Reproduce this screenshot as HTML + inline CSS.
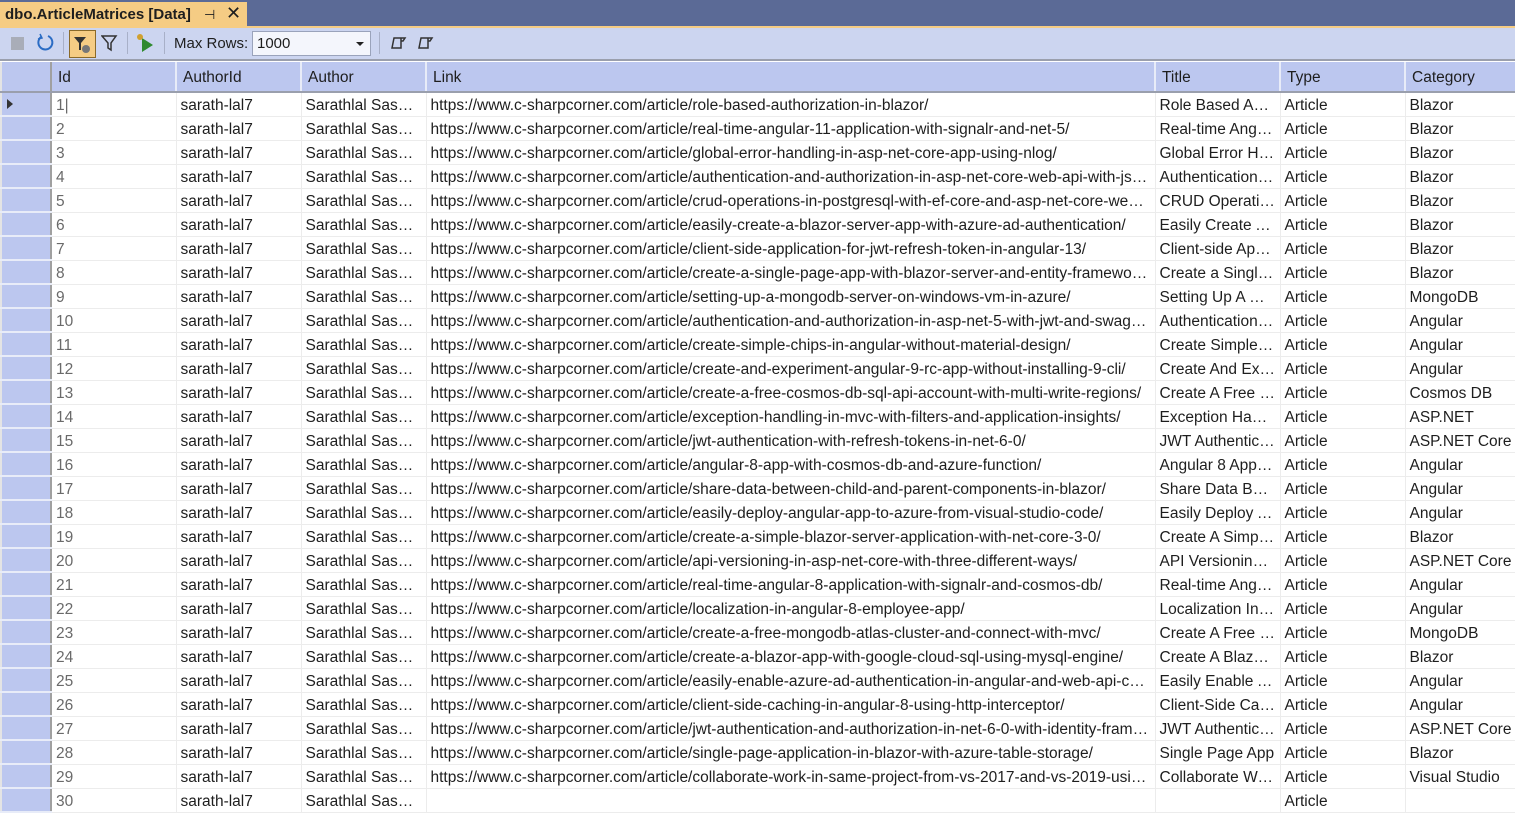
<!DOCTYPE html>
<html><head><meta charset="utf-8"><style>
*{margin:0;padding:0;box-sizing:border-box}
body{width:1515px;height:792px;overflow:hidden;background:#fff;font-family:"Liberation Sans",sans-serif;font-size:15.5px;color:#1e1e1e;position:relative}
.tabbar{position:absolute;left:0;top:0;width:1515px;height:26px;background:#5b6a96}
.tab{position:absolute;left:0;top:2px;width:247px;height:26px;background:#f5cc84;font-weight:bold;font-size:15px;line-height:25px;padding-left:5px;color:#1e1e1e}
.tab .pin{position:absolute;left:204px;top:0;font-weight:normal;font-size:13px}
.tab .x{position:absolute;left:226px;top:-1px;font-weight:normal;font-size:18px}
.oline{position:absolute;left:0;top:26px;width:1515px;height:2px;background:#f5cc84}
.tb{position:absolute;left:0;top:28px;width:1515px;height:33px;background:#ccd5f0;border-bottom:2px solid #9a9fad}
.sep{position:absolute;top:4px;width:1px;height:22px;background:#a8b0c8}
.lbl{position:absolute;left:174px;top:7px;font-size:15px}
.combo{position:absolute;left:252px;top:3px;width:119px;height:25px;background:#f4f6fc;border:1px solid #9aa3bb;padding:3px 4px;font-size:15px}
.combo:after{content:"";position:absolute;right:6px;top:10px;border:4px solid transparent;border-top:4px solid #222}
table{position:absolute;left:0;top:62px;border-collapse:collapse;table-layout:fixed;width:1529px}
th{height:30px;background:#bcc7ef;font-weight:normal;text-align:left;padding-left:6px;padding-top:3px;border-right:2px solid #e8ecf8;border-bottom:2px solid #9a9fad;font-size:15.5px;color:#1e1e1e;overflow:hidden;white-space:nowrap}
td{height:24px;padding-left:4px;padding-right:4px;padding-top:3px;white-space:nowrap;overflow:hidden;text-overflow:ellipsis;border-right:1px solid #ececec;border-bottom:1px solid #ececec}
td.rh{background:#bcc7ef;border-left:2px solid #e4e4e4;border-right:2px solid #a0a0a0;border-bottom:2px solid #e8ecf8;padding:0}
th.rh{border-right:2px solid #a0a0a0;border-left:2px solid #e4e4e4;padding:0}
td.id{color:#6a6a6a}
</style></head><body>
<div class="tabbar"></div>
<div class="tab">dbo.ArticleMatrices [Data]<span class="pin">⊣</span><span class="x">✕</span></div>
<div class="oline"></div>
<div class="tb">
<div style="position:absolute;left:11px;top:9px;width:13px;height:13px;background:#a9adb8"></div>
<svg style="position:absolute;left:35px;top:5px" width="20" height="20" viewBox="0 0 20 20"><path d="M6 4 A7 7 0 1 0 13 3" fill="none" stroke="#2b6cc4" stroke-width="2"/><path d="M5 1 L7 5 L3 6" fill="none" stroke="#2b6cc4" stroke-width="1.5"/></svg>
<div class="sep" style="left:63px"></div>
<div style="position:absolute;left:69px;top:2px;width:27px;height:28px;background:#f5cc84;border:1px solid #8a6a2a"></div>
<svg style="position:absolute;left:73px;top:8px" width="20" height="18"><path d="M1 1 H13 L8 7 V14 L6 14 V7 Z" fill="#333"/><circle cx="13" cy="13" r="4" fill="#777"/></svg>
<svg style="position:absolute;left:101px;top:7px" width="18" height="18"><path d="M1 1 H15 L10 8 V15 L7 13 V8 Z" fill="none" stroke="#333" stroke-width="1.5"/></svg>
<div class="sep" style="left:127px"></div>
<svg style="position:absolute;left:135px;top:5px" width="20" height="20"><path d="M7 5 L18 12 L7 19 Z" fill="#2f8a2f"/><circle cx="5" cy="4" r="3" fill="#d0a030"/></svg>
<div class="sep" style="left:164px"></div>
<div class="lbl">Max Rows:</div>
<div class="combo">1000</div>
<div class="sep" style="left:379px"></div>
<svg style="position:absolute;left:390px;top:7px" width="18" height="18"><path d="M4 3 H15 L13 6 H11 V13 H2 Z M11 3 V6" fill="none" stroke="#333" stroke-width="1.5"/></svg>
<svg style="position:absolute;left:417px;top:7px" width="18" height="18"><path d="M4 3 H15 L13 6 H11 V13 H2 Z M11 3 V6" fill="none" stroke="#333" stroke-width="1.5"/></svg>
</div>
<table>
<colgroup><col style="width:50px"><col style="width:125px"><col style="width:125px"><col style="width:125px"><col style="width:729px"><col style="width:125px"><col style="width:125px"><col style="width:125px"></colgroup>
<tr><th class="rh"></th><th>Id</th><th>AuthorId</th><th>Author</th><th>Link</th><th>Title</th><th>Type</th><th>Category</th></tr>
<tr><td class="rh"><span style="display:inline-block;margin-left:5px;border:5px solid transparent;border-left:6px solid #333;vertical-align:middle"></span></td><td class="id">1|</td><td>sarath-lal7</td><td>Sarathlal Saseendran</td><td>https://www.c-sharpcorner.com/article/role-based-authorization-in-blazor/</td><td>Role Based Authorization</td><td>Article</td><td>Blazor</td></tr>
<tr><td class="rh"></td><td class="id">2</td><td>sarath-lal7</td><td>Sarathlal Saseendran</td><td>https://www.c-sharpcorner.com/article/real-time-angular-11-application-with-signalr-and-net-5/</td><td>Real-time Angular</td><td>Article</td><td>Blazor</td></tr>
<tr><td class="rh"></td><td class="id">3</td><td>sarath-lal7</td><td>Sarathlal Saseendran</td><td>https://www.c-sharpcorner.com/article/global-error-handling-in-asp-net-core-app-using-nlog/</td><td>Global Error Handling</td><td>Article</td><td>Blazor</td></tr>
<tr><td class="rh"></td><td class="id">4</td><td>sarath-lal7</td><td>Sarathlal Saseendran</td><td>https://www.c-sharpcorner.com/article/authentication-and-authorization-in-asp-net-core-web-api-with-json-web-tokens/</td><td>Authentication and</td><td>Article</td><td>Blazor</td></tr>
<tr><td class="rh"></td><td class="id">5</td><td>sarath-lal7</td><td>Sarathlal Saseendran</td><td>https://www.c-sharpcorner.com/article/crud-operations-in-postgresql-with-ef-core-and-asp-net-core-web-api/</td><td>CRUD Operations</td><td>Article</td><td>Blazor</td></tr>
<tr><td class="rh"></td><td class="id">6</td><td>sarath-lal7</td><td>Sarathlal Saseendran</td><td>https://www.c-sharpcorner.com/article/easily-create-a-blazor-server-app-with-azure-ad-authentication/</td><td>Easily Create A Blazor</td><td>Article</td><td>Blazor</td></tr>
<tr><td class="rh"></td><td class="id">7</td><td>sarath-lal7</td><td>Sarathlal Saseendran</td><td>https://www.c-sharpcorner.com/article/client-side-application-for-jwt-refresh-token-in-angular-13/</td><td>Client-side Application</td><td>Article</td><td>Blazor</td></tr>
<tr><td class="rh"></td><td class="id">8</td><td>sarath-lal7</td><td>Sarathlal Saseendran</td><td>https://www.c-sharpcorner.com/article/create-a-single-page-app-with-blazor-server-and-entity-framework-core/</td><td>Create a Single Page</td><td>Article</td><td>Blazor</td></tr>
<tr><td class="rh"></td><td class="id">9</td><td>sarath-lal7</td><td>Sarathlal Saseendran</td><td>https://www.c-sharpcorner.com/article/setting-up-a-mongodb-server-on-windows-vm-in-azure/</td><td>Setting Up A MongoDB</td><td>Article</td><td>MongoDB</td></tr>
<tr><td class="rh"></td><td class="id">10</td><td>sarath-lal7</td><td>Sarathlal Saseendran</td><td>https://www.c-sharpcorner.com/article/authentication-and-authorization-in-asp-net-5-with-jwt-and-swagger/</td><td>Authentication and</td><td>Article</td><td>Angular</td></tr>
<tr><td class="rh"></td><td class="id">11</td><td>sarath-lal7</td><td>Sarathlal Saseendran</td><td>https://www.c-sharpcorner.com/article/create-simple-chips-in-angular-without-material-design/</td><td>Create Simple Chips</td><td>Article</td><td>Angular</td></tr>
<tr><td class="rh"></td><td class="id">12</td><td>sarath-lal7</td><td>Sarathlal Saseendran</td><td>https://www.c-sharpcorner.com/article/create-and-experiment-angular-9-rc-app-without-installing-9-cli/</td><td>Create And Experiment</td><td>Article</td><td>Angular</td></tr>
<tr><td class="rh"></td><td class="id">13</td><td>sarath-lal7</td><td>Sarathlal Saseendran</td><td>https://www.c-sharpcorner.com/article/create-a-free-cosmos-db-sql-api-account-with-multi-write-regions/</td><td>Create A Free Cosmos</td><td>Article</td><td>Cosmos DB</td></tr>
<tr><td class="rh"></td><td class="id">14</td><td>sarath-lal7</td><td>Sarathlal Saseendran</td><td>https://www.c-sharpcorner.com/article/exception-handling-in-mvc-with-filters-and-application-insights/</td><td>Exception Handling</td><td>Article</td><td>ASP.NET</td></tr>
<tr><td class="rh"></td><td class="id">15</td><td>sarath-lal7</td><td>Sarathlal Saseendran</td><td>https://www.c-sharpcorner.com/article/jwt-authentication-with-refresh-tokens-in-net-6-0/</td><td>JWT Authentication</td><td>Article</td><td>ASP.NET Core</td></tr>
<tr><td class="rh"></td><td class="id">16</td><td>sarath-lal7</td><td>Sarathlal Saseendran</td><td>https://www.c-sharpcorner.com/article/angular-8-app-with-cosmos-db-and-azure-function/</td><td>Angular 8 App With</td><td>Article</td><td>Angular</td></tr>
<tr><td class="rh"></td><td class="id">17</td><td>sarath-lal7</td><td>Sarathlal Saseendran</td><td>https://www.c-sharpcorner.com/article/share-data-between-child-and-parent-components-in-blazor/</td><td>Share Data Between</td><td>Article</td><td>Angular</td></tr>
<tr><td class="rh"></td><td class="id">18</td><td>sarath-lal7</td><td>Sarathlal Saseendran</td><td>https://www.c-sharpcorner.com/article/easily-deploy-angular-app-to-azure-from-visual-studio-code/</td><td>Easily Deploy Angular</td><td>Article</td><td>Angular</td></tr>
<tr><td class="rh"></td><td class="id">19</td><td>sarath-lal7</td><td>Sarathlal Saseendran</td><td>https://www.c-sharpcorner.com/article/create-a-simple-blazor-server-application-with-net-core-3-0/</td><td>Create A Simple Blazor</td><td>Article</td><td>Blazor</td></tr>
<tr><td class="rh"></td><td class="id">20</td><td>sarath-lal7</td><td>Sarathlal Saseendran</td><td>https://www.c-sharpcorner.com/article/api-versioning-in-asp-net-core-with-three-different-ways/</td><td>API Versioning In ASP</td><td>Article</td><td>ASP.NET Core</td></tr>
<tr><td class="rh"></td><td class="id">21</td><td>sarath-lal7</td><td>Sarathlal Saseendran</td><td>https://www.c-sharpcorner.com/article/real-time-angular-8-application-with-signalr-and-cosmos-db/</td><td>Real-time Angular</td><td>Article</td><td>Angular</td></tr>
<tr><td class="rh"></td><td class="id">22</td><td>sarath-lal7</td><td>Sarathlal Saseendran</td><td>https://www.c-sharpcorner.com/article/localization-in-angular-8-employee-app/</td><td>Localization In Angular</td><td>Article</td><td>Angular</td></tr>
<tr><td class="rh"></td><td class="id">23</td><td>sarath-lal7</td><td>Sarathlal Saseendran</td><td>https://www.c-sharpcorner.com/article/create-a-free-mongodb-atlas-cluster-and-connect-with-mvc/</td><td>Create A Free MongoDB</td><td>Article</td><td>MongoDB</td></tr>
<tr><td class="rh"></td><td class="id">24</td><td>sarath-lal7</td><td>Sarathlal Saseendran</td><td>https://www.c-sharpcorner.com/article/create-a-blazor-app-with-google-cloud-sql-using-mysql-engine/</td><td>Create A Blazor App</td><td>Article</td><td>Blazor</td></tr>
<tr><td class="rh"></td><td class="id">25</td><td>sarath-lal7</td><td>Sarathlal Saseendran</td><td>https://www.c-sharpcorner.com/article/easily-enable-azure-ad-authentication-in-angular-and-web-api-core/</td><td>Easily Enable Azure</td><td>Article</td><td>Angular</td></tr>
<tr><td class="rh"></td><td class="id">26</td><td>sarath-lal7</td><td>Sarathlal Saseendran</td><td>https://www.c-sharpcorner.com/article/client-side-caching-in-angular-8-using-http-interceptor/</td><td>Client-Side Caching</td><td>Article</td><td>Angular</td></tr>
<tr><td class="rh"></td><td class="id">27</td><td>sarath-lal7</td><td>Sarathlal Saseendran</td><td>https://www.c-sharpcorner.com/article/jwt-authentication-and-authorization-in-net-6-0-with-identity-framework/</td><td>JWT Authentication</td><td>Article</td><td>ASP.NET Core</td></tr>
<tr><td class="rh"></td><td class="id">28</td><td>sarath-lal7</td><td>Sarathlal Saseendran</td><td>https://www.c-sharpcorner.com/article/single-page-application-in-blazor-with-azure-table-storage/</td><td>Single Page App</td><td>Article</td><td>Blazor</td></tr>
<tr><td class="rh"></td><td class="id">29</td><td>sarath-lal7</td><td>Sarathlal Saseendran</td><td>https://www.c-sharpcorner.com/article/collaborate-work-in-same-project-from-vs-2017-and-vs-2019-using-git/</td><td>Collaborate Work</td><td>Article</td><td>Visual Studio</td></tr>
<tr><td class="rh"></td><td class="id">30</td><td>sarath-lal7</td><td>Sarathlal Saseendran</td><td></td><td></td><td>Article</td><td></td></tr>
</table>
</body></html>
